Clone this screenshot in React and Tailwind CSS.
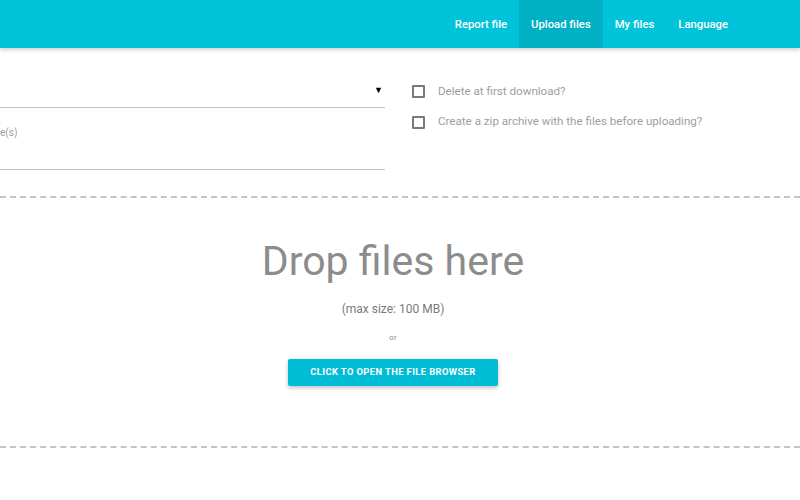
const navItems = ["Report file", "Upload files", "My files", "Language"]

const Checkbox = ({ label }) => (
  <label className="flex items-center">
    <span className="w-[13px] h-[13px] border-2 border-[#7a7a7a] rounded-[1px] bg-white" />
    <span className="ml-[13px] text-[11.6px] text-[#9e9e9e]">{label}</span>
  </label>
)

const App = () => {
  return (
    <div className="w-[800px] h-[500px] bg-white overflow-hidden font-['Roboto',sans-serif]">
      <nav className="h-[48px] bg-[#00c3d9] shadow-[0_2px_4px_rgba(0,0,0,0.18)] flex justify-end pr-[60px]">
        <ul className="flex h-full">
          {navItems.map((item) => (
            <li
              key={item}
              className={
                "h-full flex items-center pt-[2px] px-[12px] text-[11.3px] font-medium text-white " +
                (item === "Upload files" ? "bg-[#00b1c5]" : "")
              }
            >
              {item}
            </li>
          ))}
        </ul>
      </nav>

      <div className="flex">
        <div className="w-[385px] shrink-0">
          <div className="h-[60px] border-b border-[#c4c4c4] flex items-end justify-end pb-[12px] pr-[2px]">
            <span className="text-[9px] text-black leading-none">▼</span>
          </div>
          <div className="h-[62px] border-b border-[#c4c4c4] pt-[20px]">
            <span className="text-[10px] text-[#9e9e9e] leading-none block">e(s)</span>
          </div>
        </div>
        <div className="ml-[27px] pt-[35px] flex flex-col gap-[13px]">
          <Checkbox label="Delete at first download?" />
          <Checkbox label="Create a zip archive with the files before uploading?" />
        </div>
      </div>

      <div className="mt-[26px] h-[252px] border-y-2 border-dashed border-[#c4c4c4] flex flex-col items-center pr-[14px]">
        <h1 className="mt-[43px] text-[41px] leading-none text-[#8c8c8c]">Drop files here</h1>
        <p className="mt-[18px] text-[12px] text-[#7a7a7a]">(max size: 100 MB)</p>
        <p className="mt-[14px] text-[8px] text-[#8c8c8c]">or</p>
        <button className="mt-[15px] w-[210px] h-[27px] bg-[#00bcd4] text-white text-[9.4px] font-bold uppercase tracking-[0.4px] rounded-[2px] shadow-[0_2px_4px_rgba(0,0,0,0.25)]">
          Click to open the file browser
        </button>
      </div>
    </div>
  )
}

export default App
